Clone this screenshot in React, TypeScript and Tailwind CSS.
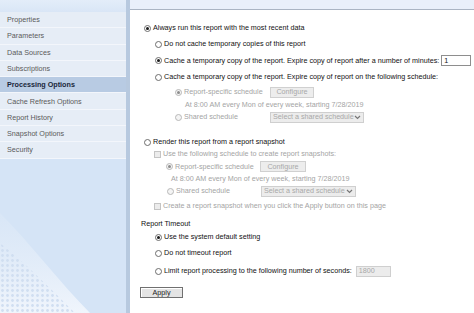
import React from 'react';

// Sidebar entries of the report properties page
const navItems = [
  'Properties',
  'Parameters',
  'Data Sources',
  'Subscriptions',
  'Processing Options',
  'Cache Refresh Options',
  'Report History',
  'Snapshot Options',
  'Security',
];
const ACTIVE = 'Processing Options';

const Radio: React.FC<{ checked?: boolean; disabled?: boolean }> = ({ checked, disabled }) => (
  <span
    className={`flex h-[7px] w-[7px] shrink-0 items-center justify-center rounded-full border ${
      disabled ? 'border-[#b8b8b8] bg-[#f4f4f4]' : 'border-[#6d6d6d] bg-white'
    }`}
  >
    {checked && (
      <span className={`h-[3px] w-[3px] rounded-full ${disabled ? 'bg-[#8c8c8c]' : 'bg-[#1a1a1a]'}`} />
    )}
  </span>
);

const Check: React.FC = () => (
  <span className="h-[7px] w-[7px] shrink-0 border border-[#c4c4c4] bg-[#ececec]" />
);

const Btn: React.FC<{ label: string; w: string }> = ({ label, w }) => (
  <span
    className={`flex h-[11px] ${w} items-center justify-center border border-[#d0d0d0] bg-[#ededed] text-[#a8a8a8]`}
  >
    {label}
  </span>
);

const Select: React.FC<{ w: string }> = ({ w }) => (
  <span
    className={`flex h-[11px] ${w} items-center justify-between border border-[#cfcfcf] bg-[#ececec] pl-[2px] pr-[2px] text-[#a8a8a8]`}
  >
    <span>Select a shared schedule</span>
    <svg width="7" height="5" viewBox="0 0 7 5">
      <path d="M1 1 L3.5 3.5 L6 1" fill="none" stroke="#777" strokeWidth="1.2" />
    </svg>
  </span>
);

const SidebarWave: React.FC = () => (
  <svg className="absolute bottom-0 left-0" width="126" height="110" viewBox="0 0 126 110">
    <defs>
      <pattern id="dots" width="5" height="5" patternUnits="userSpaceOnUse">
        <circle cx="2.5" cy="2.5" r="1.4" fill="#d0def1" />
      </pattern>
      <linearGradient id="fade" x1="0" y1="0" x2="0" y2="1">
        <stop offset="0" stopColor="#e2ecf8" stopOpacity="0.3" />
        <stop offset="1" stopColor="#f0f5fc" stopOpacity="1" />
      </linearGradient>
    </defs>
    <path d="M0 10 C30 40 60 80 90 110 L0 110 Z" fill="url(#fade)" />
    <path d="M0 40 C25 60 50 85 75 110 L0 110 Z" fill="url(#dots)" />
  </svg>
);

export default function App() {
  return (
    <div
      className="flex h-[313px] w-[474px] overflow-hidden whitespace-nowrap bg-white text-[7.2px] leading-none text-[#111]"
      style={{ fontFamily: '"Liberation Sans", Arial, sans-serif' }}
    >
      {/* Sidebar */}
      <div className="relative flex w-[130px] shrink-0 flex-col border-r-[4px] border-[#b7c9df] bg-[#d5e4f6]">
        <div className="h-[12px] bg-gradient-to-b from-[#e3edf9] to-[#d9e6f6]" />
        <div className="relative z-10 flex flex-col">
          {navItems.map((item) => (
            <div
              key={item}
              className={`flex h-[16.3px] items-center border-b border-[#f3f6fb] pl-[7px] ${
                item === ACTIVE ? 'bg-[#b8cbe3] font-bold text-[#18263a]' : 'bg-[#e6edf6] text-[#5a5a5a]'
              }`}
            >
              {item}
            </div>
          ))}
        </div>
        <SidebarWave />
      </div>

      {/* Main content */}
      <div className="flex min-w-0 flex-1 flex-col">
        <div className="h-[10px] border-b border-[#aab4c3] bg-[#e9effa]" />
        <div className="flex flex-col pl-[10px] pt-[10px]">
          <div className="flex h-[16px] items-center gap-[2px] pl-[4px]">
            <Radio checked />
            <span>Always run this report with the most recent data</span>
          </div>
          <div className="flex h-[16px] items-center gap-[2px] pl-[15px]">
            <Radio />
            <span>Do not cache temporary copies of this report</span>
          </div>
          <div className="flex h-[17px] items-center gap-[2px] pl-[15px]">
            <Radio checked />
            <span className="shrink-0">
              Cache a temporary copy of the report. Expire copy of report after a number of minutes:
            </span>
            <span className="flex h-[11px] w-[30px] shrink-0 items-center border border-[#8e8e8e] pl-[2px]">
              1
            </span>
          </div>
          <div className="flex h-[16px] items-center gap-[2px] pl-[15px]">
            <Radio />
            <span>Cache a temporary copy of the report. Expire copy of report on the following schedule:</span>
          </div>
          <div className="flex h-[14px] items-center pl-[35px] text-[#a4a4a4]">
            <Radio checked disabled />
            <span className="ml-[2px] w-[86px]">Report-specific schedule</span>
            <Btn label="Configure" w="w-[44px]" />
          </div>
          <div className="flex h-[12px] items-center pl-[45px] text-[#a4a4a4]">
            At 8:00 AM every Mon of every week, starting 7/28/2019
          </div>
          <div className="flex h-[12px] items-center pl-[35px] text-[#a4a4a4]">
            <Radio disabled />
            <span className="ml-[2px] w-[86px]">Shared schedule</span>
            <Select w="w-[94px]" />
          </div>

          <div className="mt-[13px] flex h-[12px] items-center gap-[2px] pl-[4px]">
            <Radio />
            <span>Render this report from a report snapshot</span>
          </div>
          <div className="flex h-[12px] items-center gap-[2px] pl-[14px] text-[#a4a4a4]">
            <Check />
            <span>Use the following schedule to create report snapshots:</span>
          </div>
          <div className="flex h-[13px] items-center pl-[26px] text-[#a4a4a4]">
            <Radio checked disabled />
            <span className="ml-[2px] w-[85px]">Report-specific schedule</span>
            <Btn label="Configure" w="w-[46px]" />
          </div>
          <div className="flex h-[12px] items-center pl-[31px] text-[#a4a4a4]">
            At 8:00 AM every Mon of every week, starting 7/28/2019
          </div>
          <div className="flex h-[12px] items-center pl-[27px] text-[#a4a4a4]">
            <Radio disabled />
            <span className="ml-[2px] w-[85px]">Shared schedule</span>
            <Select w="w-[95px]" />
          </div>
          <div className="flex h-[18px] items-center gap-[2px] pl-[14px] text-[#a4a4a4]">
            <Check />
            <span>Create a report snapshot when you click the Apply button on this page</span>
          </div>

          <div className="mt-[2px] flex h-[14px] items-center pl-[1px]">Report Timeout</div>
          <div className="flex h-[12px] items-center gap-[2px] pl-[15px]">
            <Radio checked />
            <span>Use the system default setting</span>
          </div>
          <div className="flex h-[20px] items-center gap-[2px] pl-[15px]">
            <Radio />
            <span>Do not timeout report</span>
          </div>
          <div className="flex h-[16px] items-center gap-[2px] pl-[15px]">
            <Radio />
            <span>Limit report processing to the following number of seconds:</span>
            <span className="ml-[2px] flex h-[11px] w-[35px] items-center border border-[#cfcfcf] bg-[#ececec] pl-[2px] text-[#a8a8a8]">
              1800
            </span>
          </div>
          <div className="mt-[8px] flex">
            <button className="flex h-[11px] w-[43px] items-center justify-center border border-[#707070] bg-[#e4e4e4] text-[#1c1c1c] shadow-[inset_1px_1px_0_#fff]">
              Apply
            </button>
          </div>
        </div>
      </div>
    </div>
  );
}
